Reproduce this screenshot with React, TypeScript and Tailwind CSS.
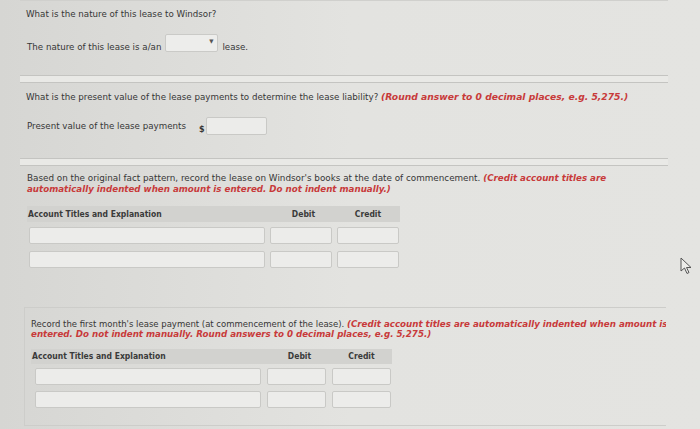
import React from 'react';

function Separator({ className = '' }: { className?: string }) {
  return <div className={`ml-[20px] w-[648px] h-[8px] border-y border-[#c4c4c1] bg-[#e9e9e6] ${className}`} />;
}

function Box({ className = '' }: { className?: string }) {
  return <div className={`border border-[#c9c9c6] bg-[#ececea] rounded-[2px] ${className}`} />;
}

type TableProps = { wide: number; narrow: number; gap: number; headH: number; rowH: number; firstGap: number; rowGap: number; inset: number };

function JournalTable({ wide, narrow, gap, headH, rowH, firstGap, rowGap, inset }: TableProps) {
  return (
    <div className="flex flex-col">
      <div
        className="flex items-center bg-[#d2d2cf] font-['DejaVu_Sans_Condensed',sans-serif] font-bold text-[8.5px] text-[#3a3a3a]"
        style={{ width: inset + wide + narrow * 2 + gap * 2 + 1, height: headH }}
      >
        <div className="pl-[1px]" style={{ width: inset + wide + gap }}>Account Titles and Explanation</div>
        <div className="text-center" style={{ width: narrow + gap }}>Debit</div>
        <div className="text-center" style={{ width: narrow }}>Credit</div>
      </div>
      {[0, 1].map((r) => (
        <div key={r} className="flex" style={{ gap, paddingLeft: inset, marginTop: r === 0 ? firstGap : rowGap }}>
          <div style={{ width: wide, height: rowH }}>
            <Box className="w-full h-full" />
          </div>
          <div style={{ width: narrow, height: rowH }}>
            <Box className="w-full h-full" />
          </div>
          <div style={{ width: narrow, height: rowH }}>
            <Box className="w-full h-full" />
          </div>
        </div>
      ))}
    </div>
  );
}

export default function App() {
  return (
    <div className="relative w-[700px] h-[429px] overflow-hidden bg-gradient-to-r from-[#d6d6d3] via-[#e3e3e0] to-[#e4e4e1] font-['DejaVu_Sans',sans-serif] text-[#363636]">
      {/* nature of lease */}
      <div className="ml-[20px] w-[648px] border-t border-[#d0d0cd]" />
      <div className="pl-[26px] pt-[8px] text-[8.7px] leading-[11px]">What is the nature of this lease to Windsor?</div>
      <div className="flex items-end pl-[27px] mt-[14px] h-[18px] text-[8.7px] leading-[11px]">
        <span className="mb-[-1px]">The nature of this lease is a/an</span>
        <div className="relative ml-[4px] w-[53px] h-[18px] border border-[#cacac7] bg-[#ededeb] rounded-[2px]">
          <span className="absolute right-[4px] top-[2px] text-[5.5px] leading-[8px] text-[#555]">▼</span>
        </div>
        <span className="ml-[4px] mb-[-1px]">lease.</span>
      </div>

      <Separator className="mt-[23px]" />

      {/* present value */}
      <div className="pl-[26px] mt-[8px] text-[8.7px] leading-[11px] whitespace-nowrap">
        What is the present value of the lease payments to determine the lease liability?{' '}
        <span className="italic font-bold text-[9.2px] text-[#c83a3a]">(Round answer to 0 decimal places, e.g. 5,275.)</span>
      </div>
      <div className="flex items-center pl-[27px] mt-[14px] h-[18px] text-[8.7px] leading-[11px]">
        <span>Present value of the lease payments</span>
        <span className="ml-[13px] mt-[7px] font-bold text-[8px]">$</span>
        <Box className="w-[61px] h-[18px] ml-[1px]" />
      </div>

      <Separator className="mt-[23px]" />

      {/* record lease */}
      <div className="pl-[27px] mt-[7px] text-[8.8px] leading-[11px] whitespace-nowrap">
        Based on the original fact pattern, record the lease on Windsor's books at the date of commencement.{' '}
        <span className="italic font-bold text-[8.7px] text-[#c83a3a]">
          (Credit account titles are
          <br />
          automatically indented when amount is entered. Do not indent manually.)
        </span>
      </div>
      <div className="pl-[27px] mt-[11px]">
        <JournalTable wide={236} narrow={62} gap={5} headH={16} rowH={17} firstGap={5} rowGap={7} inset={2} />
      </div>

      {/* first month payment */}
      <div className="ml-[24px] w-[642px] h-[119px] mt-[39px] border border-[#cdcdca] border-r-0 overflow-hidden">
        <div className="pl-[6px] pt-[11px] text-[8.5px] leading-[10px] whitespace-nowrap">
          Record the first month's lease payment (at commencement of the lease).{' '}
          <span className="italic font-bold text-[8.7px] text-[#c83a3a]">
            (Credit account titles are automatically indented when amount is
            <br />
            entered. Do not indent manually. Round answers to 0 decimal places, e.g. 5,275.)
          </span>
        </div>
        <div className="pl-[6px] mt-[10px]">
          <JournalTable wide={226} narrow={59} gap={6} headH={15} rowH={17} firstGap={4} rowGap={6} inset={4} />
        </div>
      </div>

      {/* mouse cursor */}
      <svg className="absolute left-[680px] top-[257px]" width="14" height="19" viewBox="0 0 14 19">
        <path d="M1 1 L1 14 L4.5 11 L7 16.5 L9 15.5 L6.5 10.5 L11 10.5 Z" fill="#ecece9" stroke="#555" strokeWidth="1" strokeLinejoin="round" />
      </svg>
    </div>
  );
}
